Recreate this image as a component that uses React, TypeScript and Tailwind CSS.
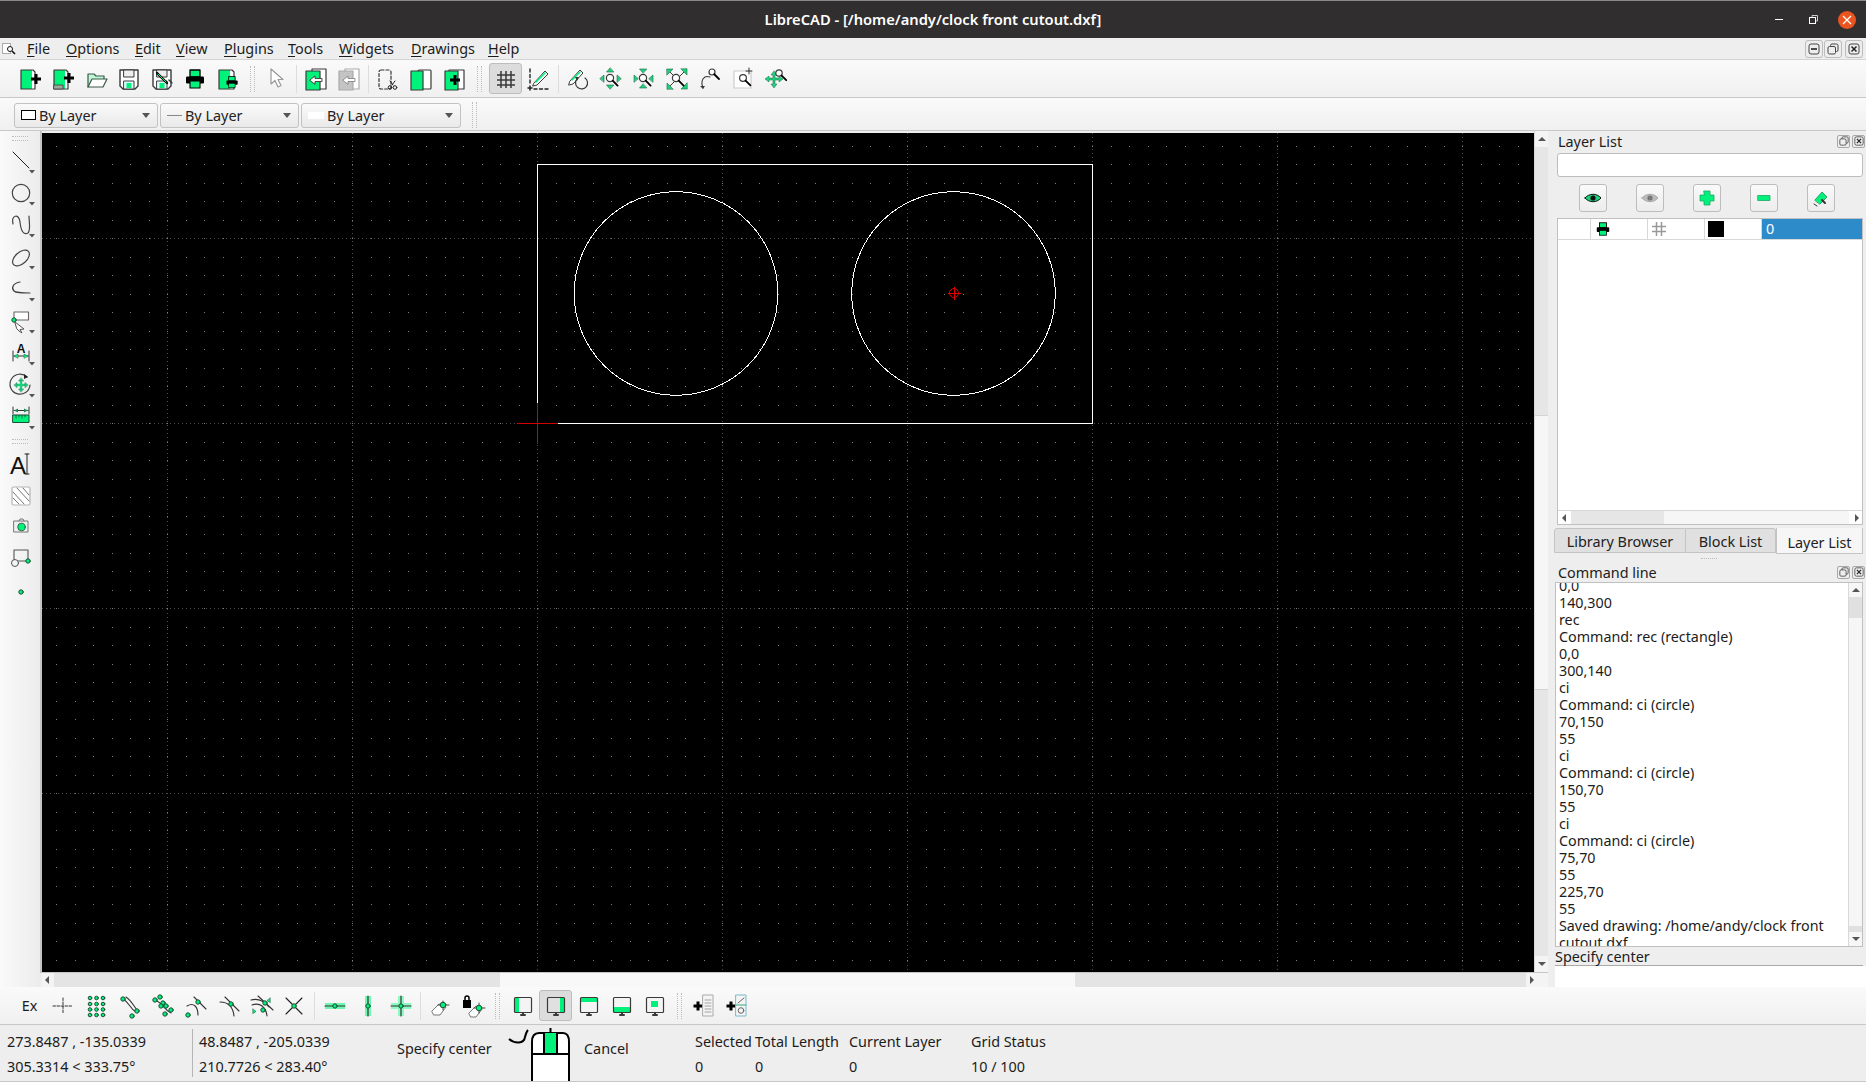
import React from "react";

const G = "#00f27a";
const S = "#3a3a3a";

function I({ children, s = 26 }: { children: React.ReactNode; s?: number }) {
  return (
    <svg width={s} height={s} viewBox={`0 0 ${s} ${s}`} fill="none" strokeLinecap="round" strokeLinejoin="round">
      {children}
    </svg>
  );
}
const Dot = ({ x, y, r = 2.2 }: { x: number; y: number; r?: number }) => (
  <circle cx={x} cy={y} r={r} fill={G} stroke="#1d4f38" strokeWidth={1} />
);
const Plus = ({ x, y, l = 5, w = 3 }: { x: number; y: number; l?: number; w?: number }) => (
  <path d={`M${x - l} ${y}H${x + l}M${x} ${y - l}V${y + l}`} stroke="#000" strokeWidth={w} strokeLinecap="butt" />
);
const Mag = ({ x, y, r = 3.6 }: { x: number; y: number; r?: number }) => (
  <g>
    <circle cx={x} cy={y} r={r} fill="#fff" stroke={S} strokeWidth={1.2} />
    <path d={`M${x + r * 0.75} ${y + r * 0.75}L${x + r + 4} ${y + r + 4}`} stroke="#000" strokeWidth={1.8} />
  </g>
);
const Page = ({ x = 4, w = 14, g = 11 }: { x?: number; w?: number; g?: number }) => (
  <g>
    <path d={`M${x} 4H${x + w - 2}L${x + w} 6V23H${x}Z`} fill="#fff" />
    <rect x={x} y={4} width={g} height={19} fill={G} />
    <path d={`M${x} 4H${x + w - 2}L${x + w} 6V23H${x}Z`} stroke={S} strokeWidth={1.2} />
  </g>
);
const Floppy = () => (
  <g>
    <path d="M4 4H22V20L19 23H7L4 20Z" fill="#fff" stroke={S} strokeWidth={1.4} />
    <rect x={8} y={4} width={10} height={7} fill="#eee" stroke={S} strokeWidth={1} />
    <rect x={8} y={15} width={10} height={8} fill="#dff" stroke={S} strokeWidth={1} />
    <rect x={10.5} y={17} width={5} height={5} fill={G} />
  </g>
);
const Printer = ({ x = 0, y = 0, k = 1 }: { x?: number; y?: number; k?: number }) => (
  <g transform={`translate(${x} ${y}) scale(${k})`}>
    <rect x={8} y={4} width={10} height={7} fill={G} stroke="#000" strokeWidth={1.3} />
    <rect x={4} y={10.500} width={18} height={7} rx={1.200} fill="#000" />
    <rect x={8} y={15} width={10} height={7} fill={G} stroke="#000" strokeWidth={1.1} />
  </g>
);
const Triangles = ({ inward }: { inward?: boolean }) => {
  const out = ["M12 2l-3.500 4h7z", "M12 23l-3.500-4h7z", "M2 12.500l4-3.500v7z", "M23 12.500l-4-3.500v7z"];
  const inw = ["M12 7l-3.500-4h7z", "M12 18l-3.500 4h7z", "M7 12.500l-4-3.500v7z", "M18 12.500l4-3.500v7z"];
  return (
    <g>
      {(inward ? inw : out).map((d) => (
        <path key={d} d={d} fill="#1fd07c" stroke="#1d6a48" strokeWidth={0.6} />
      ))}
    </g>
  );
};
const Monitor = ({ kind }: { kind: "l" | "r" | "t" | "b" | "c" }) => (
  <I>
    <rect x={5} y={5} width={16} height={14} fill={kind === "r" ? "#e0e0e0" : "#f4f4f4"} />
    {kind === "l" && <rect x={5} y={5} width={4} height={14} fill={G} />}
    {kind === "r" && <rect x={17} y={5} width={4} height={14} fill={G} />}
    {kind === "t" && <rect x={5} y={5} width={16} height={4} fill={G} />}
    {kind === "b" && <rect x={5} y={14} width={16} height={5} fill={G} />}
    {kind === "c" && <rect x={9} y={8} width={7} height={6} fill={G} />}
    <rect x={4.5} y={4.5} width={17} height={15} rx={1} stroke={S} strokeWidth={1.2} />
    <path d="M11 22h4M13 20v2" stroke={S} strokeWidth={2} />
  </I>
);

const top1: React.ReactNode[] = [
  <I key="a"><Page /><Plus x={19} y={13} /></I>,
  <I key="b"><Page /><rect x={4} y={19} width={9} height={4} fill="#9a9" stroke={S} strokeWidth={0.8} /><Plus x={19} y={12} /></I>,
  <I key="c">
    <path d="M5 21V8h6l2 2h8v4" fill="#bff7d8" stroke="#3a5a48" strokeWidth={1.2} />
    <path d="M5 21l4-8h15l-4 8z" fill="#fff" stroke="#3a5a48" strokeWidth={1.2} />
  </I>,
  <I key="d"><Floppy /></I>,
  <I key="e"><Floppy /><path d="M8 7l10 10" stroke="#000" strokeWidth={2.4} /><path d="M9 8l8 8" stroke={G} strokeWidth={1} /><path d="M20 14l3 3" stroke={S} strokeWidth={1.4} /></I>,
  <I key="f"><Printer /></I>,
  <I key="g"><Page x={4} w={15} g={11} /><Printer x={9} y={8} k={0.62} /></I>,
];
const arrow = (
  <I>
    <path d="M8 3V18L12 14.5L15 21L18 19.5L15 13.5H20Z" fill="#fff" stroke="#9a9a9a" strokeWidth={1.2} />
  </I>
);
const twoPages = (c: string) => (
  <I>
    <rect x={9} y={3} width={14} height={20} fill="#fff" stroke={c === G ? S : "#aaa"} strokeWidth={1.2} />
    <rect x={3} y={5} width={14} height={19} fill={c} stroke={c === G ? S : "#aaa"} strokeWidth={1.2} />
    <path d="M7 14l5-4v2.500h7v3h-7v2.500z" fill="#fff" stroke={c === G ? S : "#888"} strokeWidth={0.9} />
  </I>
);
const win3 = [
  <I key="a">
    <rect x={4} y={4} width={12} height={19} rx={2} stroke="#333" strokeWidth={1.2} strokeDasharray="3 2" />
    <path d="M15 15l3 4M20 15l-3 4" stroke="#222" strokeWidth={1} />
    <circle cx={15} cy={21.5} r={1.8} stroke="#222" />
    <circle cx={20} cy={21.5} r={1.8} stroke="#222" />
  </I>,
  <I key="b">
    <rect x={10} y={4} width={13} height={19} rx={1} fill="#fff" stroke={S} strokeWidth={1.2} />
    <rect x={3} y={5} width={12} height={19} fill={G} stroke={S} strokeWidth={1.2} />
  </I>,
  <I key="c">
    <rect x={8} y={4} width={15} height={19} fill="#fff" stroke={S} strokeWidth={1.2} />
    <rect x={4} y={5} width={13} height={19} fill={G} stroke={S} strokeWidth={1.2} />
    <Plus x={14} y={14} />
  </I>,
];
const gridIcon = (
  <I>
    <path d="M9 5V22M14 5V22M19 5V22M5 9H23M5 14H23M5 19H23" stroke={S} strokeWidth={1.5} strokeLinecap="butt" />
  </I>
);
const draft = (
  <I>
    <path d="M5 3V19M9 23H23" stroke="#222" strokeWidth={1.4} strokeDasharray="3 2.5" />
    <path d="M3 22H7M5 20V24" stroke="#222" strokeWidth={1.5} />
    <path d="M9 17L20 5L23 8L12 19L8 20Z" fill="#fff" stroke={S} strokeWidth={1} />
    <path d="M11 16L20 7" stroke={G} strokeWidth={1.6} />
  </I>
);
const zooms = [
  <I key="a">
    <path d="M5 15L15 4L18 7L8 18L4 19Z" fill="#fff" stroke={S} strokeWidth={1} />
    <path d="M7 14L15 6" stroke={G} strokeWidth={1.5} />
    <path d="M12 13A6 6 0 1 0 20 12" stroke={S} strokeWidth={1.2} />
    <path d="M10 11l4 0l-2 4z" fill={S} />
  </I>,
  <I key="b"><Triangles /><Mag x={12} y={12} /></I>,
  <I key="c"><Triangles inward /><Mag x={12} y={12} /></I>,
  <I key="d">
    <path d="M6 6L10 10M20 6L16 10M6 20L10 16" stroke={S} strokeWidth={1} />
    <path d="M3 3h6l-6 6zM23 3v6l-6-6zM3 23v-6l6 6zM23 23h-6l6-6z" fill="#1fd07c" stroke="#1d6a48" strokeWidth={0.6} />
    <Mag x={12} y={12} />
  </I>,
  <I key="e">
    <Mag x={15} y={6} r={3} />
    <path d="M6 22C3 14 7 9 13 11" stroke={S} strokeWidth={1.1} />
    <path d="M3 20l3 3l2-3" fill={S} />
  </I>,
  <I key="f">
    <rect x={4} y={5} width={17} height={17} fill="#fff" stroke="#ccc" strokeWidth={1.2} />
    <Mag x={13} y={12} r={3.4} />
    <path d="M19 2v6M16 5h6" stroke="#333" strokeWidth={1} />
  </I>,
  <I key="g">
    <path d="M11 5l-3 4h2v3H6v-2l-4 3 4 3v-2h4v4H8l3 4 3-4h-2v-4h4v2l4-3-4-3v2h-4V9h2z" fill="#1fd07c" stroke="#1d6a48" strokeWidth={0.5} />
    <Mag x={16} y={7} r={3.2} />
  </I>,
];

function Tb({ children, on }: { children?: React.ReactNode; on?: boolean }) {
  return (
    <div className="w-[33px] h-[34px] shrink-0 flex items-center justify-center">
      {on ? (
        <div className="w-[33px] h-[31px] rounded-[3px] border border-[#bdbdbd] bg-[#dcdcdc] flex items-center justify-center">{children}</div>
      ) : (
        children
      )}
    </div>
  );
}
const Sep = ({ w }: { w: string }) => (
  <div className={`${w} h-[28px] shrink-0 flex justify-center`}>
    <div className="w-px h-full bg-[#dddddd]" />
  </div>
);
const Handle = ({ w }: { w: string }) => (
  <div className={`${w} h-[26px] shrink-0 flex justify-center`}>
    <div className="w-[5px] h-full border-x border-dotted border-[#bcbcbc]" />
  </div>
);

const L = ({ children, tri = true }: { children: React.ReactNode; tri?: boolean }) => (
  <div className="w-[40px] h-[32px] shrink-0">
    <svg width={40} height={32} viewBox="0 0 40 32" fill="none" strokeLinecap="round" strokeLinejoin="round">
      {children}
      {tri && <path d="M29 24h6l-3 3.400z" fill="#555" />}
    </svg>
  </div>
);
const left1 = [
  <path key="a" d="M13 6L29 22" stroke="#222" strokeWidth={1} />,
  <circle key="b" cx={21} cy={15} r={8.7} stroke="#444" strokeWidth={1.2} />,
  <path key="c" d="M13 14C11 5 19 3 20 12C21 22 24 25 28 23C31 20 29 12 29 6" stroke="#444" strokeWidth={1.2} />,
  <ellipse key="d" cx={21} cy={16} rx={10} ry={5.8} transform="rotate(-42 21 16)" stroke="#444" strokeWidth={1.2} />,
  <path key="e" d="M20 8C13 9 11 14 14 17C16 19 20 19 30 19" stroke="#444" strokeWidth={1.2} />,
  <g key="f">
    <rect x={14} y={6} width={14.5} height={8} fill="#fff" stroke="#666" strokeWidth={1.1} />
    <path d="M15 16L24 23L20 23.500L22 27L19 25L17 23Z" fill="#fff" stroke="#555" strokeWidth={1} />
    <Dot x={14} y={14} />
  </g>,
  <g key="g">
    <text x={21} y={15} textAnchor="middle" fontSize={12} fontWeight={700} fill="#111" fontFamily="Liberation Sans, sans-serif">A</text>
    <path d="M13 13V23M29 13V23M14 18H28" stroke="#333" strokeWidth={1} />
    <path d="M14 18l4-2v4zM28 18l-4-2v4z" fill={G} stroke="#1d6a48" strokeWidth={0.5} />
  </g>,
  <g key="h">
    <path d="M27 7A10 10 0 1 0 30 15" stroke="#444" strokeWidth={1.2} />
    <path d="M24 4l4 3l-4 2z" fill="#222" />
    <path d="M21 11v8M17 15h8" stroke="#1fd07c" strokeWidth={2.4} strokeLinecap="butt" />
    <path d="M21 8l-2.500 3h5zM21 22l-2.500-3h5zM14 15l3-2.500v5zM28 15l-3-2.500v5z" fill="#1fd07c" stroke="#1d6a48" strokeWidth={0.4} />
  </g>,
  <g key="i">
    <path d="M13 5V12M29 5V12M14 8.500H28" stroke="#333" strokeWidth={1} />
    <path d="M14 8.500l4-2v4zM28 8.500l-4-2v4z" fill="#1d8a58" />
    <rect x={13} y={13} width={16} height={7.500} fill={G} stroke="#1d4f38" strokeWidth={1} />
    <path d="M16 13v3M19 13v2M22 13v3M25 13v2" stroke="#1d4f38" strokeWidth={0.8} />
  </g>,
];
const left2 = [
  <g key="a">
    <text x={18} y={26} textAnchor="middle" fontSize={24} fill="#111" fontFamily="Liberation Sans, sans-serif">A</text>
    <path d="M25 6h4M27 6V26M25 26h4" stroke="#222" strokeWidth={1} />
  </g>,
  <g key="b">
    <rect x={12} y={7} width={18} height={18} rx={1.5} fill="#fff" stroke="#b5b5b5" strokeWidth={1.2} />
    <path d="M13 12L24 24M13 18L19 24M17 8L29 21M23 8L29 15" stroke="#666" strokeWidth={0.9} />
  </g>,
  <g key="c">
    <rect x={14} y={9} width={14} height={11} fill="#eee" stroke="#777" strokeWidth={1} />
    <path d="M19 9l1-2h3l1 2" stroke="#777" />
    <circle cx={21.500} cy={15} r={3.800} fill={G} stroke="#1d4f38" strokeWidth={0.8} />
  </g>,
  <g key="d">
    <rect x={14} y={6} width={14} height={11} stroke="#555" strokeWidth={1.1} />
    <circle cx={15} cy={19} r={3.500} fill="#f4f4f4" stroke="#555" strokeWidth={1} />
    <Dot x={28} y={17} />
  </g>,
  <Dot key="e" x={21} y={16} />,
];

const Arc = ({ d }: { d: string }) => <path d={d} stroke="#333" strokeWidth={1.1} />;
const snaps = [
  <I key="a"><path d="M3 13H23M13 5V21" stroke="#333" strokeWidth={1} strokeDasharray="2.500 1.500" /></I>,
  <I key="b">
    {[7, 13.500, 20].flatMap((x) => [5, 11, 16.500, 22].map((y) => <Dot key={`${x}-${y}`} x={x} y={y} r={1.800} />))}
  </I>,
  <I key="c"><Arc d="M7 6C14 10 14 16 20 19" /><Arc d="M10 4C16 8 18 14 22 18" /><Dot x={7} y={6} /><Dot x={21} y={18} /><Dot x={16} y={23} /></I>,
  <I key="d"><Arc d="M6 7C14 10 14 16 22 20" /><Dot x={6} y={7} /><Dot x={11} y={4} /><Dot x={14} y={10} /><Dot x={12} y={13} /><Dot x={17} y={13} /><Dot x={22} y={17} /><Dot x={16} y={21} /></I>,
  <I key="e"><Arc d="M5 13C12 9 16 14 16 22" /><Arc d="M12 4L24 16" /><Dot x={16} y={9} /><Dot x={6} y={22} /></I>,
  <I key="f"><Arc d="M5 9C13 9 18 14 19 23" /><Arc d="M10 4L24 18" /><Dot x={16} y={11} /></I>,
  <I key="g"><Arc d="M4 12C12 9 18 14 19 23" /><Arc d="M10 3L25 17" /><Arc d="M3 7C10 5 16 8 21 14" /><Dot x={17} y={10} /><Dot x={15} y={17} /><path d="M22 5l-3 2.500l3 2zM5 16l3 2.500l-3 2z" fill={G} stroke="#1d6a48" strokeWidth={0.6} /></I>,
  <I key="h"><path d="M5 5L21 21M21 5L5 21" stroke="#222" strokeWidth={1.1} /><Dot x={13} y={13} /></I>,
];
const restricts = [
  <I key="a"><rect x={3} y={10} width={20} height={6} fill="#6ff7b2" /><path d="M3 13H23" stroke="#333" strokeWidth={1.2} /><Dot x={13} y={13} /></I>,
  <I key="b"><rect x={10} y={3} width={6} height={20} fill="#6ff7b2" /><path d="M13 3V23" stroke="#333" strokeWidth={1.2} /><Dot x={13} y={13} /></I>,
  <I key="c"><path d="M10 3h6v20h-6zM3 10h20v6H3z" fill="#8ff9c2" /><path d="M13 3V23M3 13H23" stroke="#333" strokeWidth={1.2} /><Dot x={13} y={13} /></I>,
];
const zeros = [
  <I key="a"><path d="M5 18L12 11L19 14L13 22L7 22Z" fill="#fff" stroke="#777" strokeWidth={1} /><path d="M16 8L16 17M11 12H22" stroke="#333" strokeWidth={0.9} /><Dot x={16} y={12} r={2.800} /></I>,
  <I key="b"><rect x={3} y={7} width={8} height={8} fill="#000" /><path d="M5 7V5a2 2 0 0 1 4 0v2" stroke="#000" strokeWidth={1.5} /><path d="M9 20L16 13L22 16L16 24L11 24Z" fill="#fff" stroke="#777" strokeWidth={1} /><path d="M19 10L19 20M14 15H25" stroke="#333" strokeWidth={0.9} /><Dot x={19} y={15} r={2.800} /></I>,
];
const adds = [
  <I key="a"><Plus x={7} y={13} l={4.500} /><rect x={12} y={2} width={10} height={21} fill="#f4f4f4" stroke="#aaa" strokeWidth={1} /><path d="M14 7h6M14 10h6M14 13h6M14 16h6M14 19h6" stroke="#999" strokeWidth={0.9} /></I>,
  <I key="b"><Plus x={7} y={13} l={4.500} /><rect x={12} y={2} width={10} height={21} fill="#f4f4f4" stroke="#7bc" strokeWidth={1} /><path d="M12 12h10" stroke="#3a8" strokeWidth={1} /><path d="M14 10l6-5" stroke="#555" strokeWidth={0.9} /><circle cx={17} cy={17.500} r={2.800} stroke="#555" strokeWidth={0.9} /></I>,
];

function MiniBtn({ kind, big }: { kind: "min" | "float" | "close"; big?: boolean }) {
  const cls = big
    ? "w-[18px] h-[18px] rounded-[3px] border border-[#bdbdbd] flex items-center justify-center"
    : "w-[13px] h-[13px] rounded-[2px] border border-[#a8a8a8] flex items-center justify-center";
  return (
    <div className={cls}>
      <svg width={big ? 12 : 10} height={big ? 12 : 10} viewBox="0 0 12 12" fill="none">
        {kind === "min" && <><rect x={1} y={1} width={10} height={10} rx={2} stroke="#444" /><path d="M3 6h6" stroke="#222" strokeWidth={1.6} /></>}
        {kind === "float" && <><rect x={3.500} y={1} width={7.500} height={7.500} rx={1.500} stroke="#444" /><rect x={1} y={3.500} width={7.500} height={7.500} rx={1.500} stroke="#444" fill="#eee" /></>}
        {kind === "close" && <><rect x={1} y={1} width={10} height={10} rx={2} stroke="#444" /><path d="M3.500 3.500l5 5M8.500 3.500l-5 5" stroke="#222" strokeWidth={1.5} /></>}
      </svg>
    </div>
  );
}

const menu: [string, string, string][] = [
  ["F", "ile", "w-[39px]"],
  ["O", "ptions", "w-[69px]"],
  ["E", "dit", "w-[41px]"],
  ["V", "iew", "w-[48px]"],
  ["Pl", "ugins", "w-[64px]"],
  ["T", "ools", "w-[51px]"],
  ["W", "idgets", "w-[72px]"],
  ["D", "rawings", "w-[77px]"],
  ["H", "elp", "w-[40px]"],
];

function Combo({ w, swatch, pl }: { w: string; swatch: React.ReactNode; pl: string }) {
  return (
    <div className={`${w} h-[25px] rounded-[3px] border border-[#c2c2c2] bg-linear-to-b from-[#fafafa] to-[#e9e9e9] flex items-center ${pl} shrink-0`}>
      {swatch}
      <span className="flex-1 text-[#222] pt-[1px]">By Layer</span>
      <svg width={8} height={5} viewBox="0 0 8 5" className="mr-[7px]"><path d="M0 0h8L4 5z" fill="#555" /></svg>
    </div>
  );
}

const ArrowBtn = ({ dir }: { dir: "l" | "r" | "u" | "d" }) => {
  const d = { l: "M6 1v8L2 5z", r: "M4 1v8l4-4z", u: "M1 7h8L5 3z", d: "M1 3h8L5 7z" }[dir];
  return <svg width={10} height={10} viewBox="0 0 10 10"><path d={d} fill="#555" /></svg>;
};

function Canvas() {
  const W = 1492;
  const H = 839;
  const x0 = 537.3;
  const y0 = 423.3;
  const step = 18.5;
  let dots = "";
  for (let i = -27; i < 55; i++) {
    for (let j = -16; j < 31; j++) {
      const x = Math.round(x0 + i * step);
      const y = Math.round(y0 + j * step);
      dots += `M${x} ${y}h1v1h-1z`;
    }
  }
  const mx = [-2, -1, 0, 1, 2, 3, 4, 5].map((n) => Math.round(x0 + n * 185));
  const my = [-1, 0, 1, 2].map((n) => Math.round(y0 + n * 185));
  return (
    <svg width={W} height={H} viewBox={`42 133 ${W} ${H}`} className="block bg-black shrink-0" shapeRendering="crispEdges" fill="none">
      <path d={dots} fill="#808080" />
      {mx.map((x) => <path key={x} d={`M${x + 0.5} 133V972`} stroke="#4c4c4c" strokeDasharray="1 3" />)}
      {my.map((y) => <path key={y} d={`M42 ${y + 0.5}H1534`} stroke="#4c4c4c" strokeDasharray="1 3" />)}
      <rect x={537.5} y={164.5} width={555} height={259} stroke="#fff" />
      <circle cx={676} cy={293.5} r={101.8} stroke="#fff" />
      <circle cx={953.5} cy={293.5} r={101.8} stroke="#fff" />
      <path d="M537.5 403V444M517 423.500H558" stroke="#d40000" />
      <circle cx={954} cy={293} r={4.500} stroke="#e00000" shapeRendering="auto" />
      <path d="M954 286.500V299.500M947.500 293H960.500" stroke="#e00000" />
    </svg>
  );
}

const cmd = [
  "0,0", "140,300", "rec", "Command: rec (rectangle)", "0,0", "300,140", "ci", "Command: ci (circle)", "70,150", "55", "ci",
  "Command: ci (circle)", "150,70", "55", "ci", "Command: ci (circle)", "75,70", "55", "225,70", "55",
  "Saved drawing: /home/andy/clock front", "cutout.dxf",
];

function SqBtn({ children }: { children: React.ReactNode }) {
  return (
    <div className="w-[28px] h-[28px] rounded-[3px] border border-[#bdbdbd] bg-linear-to-b from-[#fafafa] to-[#ececec] flex items-center justify-center">
      {children}
    </div>
  );
}

export default function App() {
  return (
    <div className="w-[1866px] h-[1082px] flex flex-col overflow-hidden bg-[#eeeeee] text-[14.400px] text-[#1c1c1c] [font-family:'Noto_Sans','Open_Sans',sans-serif]">
      {/* title */}
      <div className="h-[38px] shrink-0 bg-[#302e2e] border-t border-[#8a8a8a] grid grid-cols-[1fr_auto_1fr] items-center">
        <div />
        <div className="text-[14.700px] font-semibold text-white">LibreCAD - [/home/andy/clock front cutout.dxf]</div>
        <div className="flex justify-end items-center pr-[2px]">
          <div className="w-[34px] flex justify-center"><div className="w-[8px] h-[1px] bg-white" /></div>
          <div className="w-[34px] flex justify-center">
            <svg width={9} height={9} viewBox="0 0 9 9" fill="none"><path d="M3 2V.5H8.500V6H7" stroke="#ccc" /><rect x={.5} y={2.500} width={6} height={6} stroke="#fff" /></svg>
          </div>
          <div className="w-[34px] flex justify-center">
            <div className="w-[18px] h-[18px] rounded-full bg-[#e95420] flex items-center justify-center">
              <svg width={10} height={10} viewBox="0 0 10 10"><path d="M1 1l8 8M9 1l-8 8" stroke="#fff" strokeWidth={1.3} /></svg>
            </div>
          </div>
        </div>
      </div>
      {/* menu */}
      <div className="h-[22px] shrink-0 border-b border-[#d4d4d4] flex items-center">
        <div className="w-[27px] pl-[2px] shrink-0">
          <svg width={14} height={13} viewBox="0 0 14 13" fill="none"><rect x={.5} y={1.500} width={8} height={10} fill="#fff" stroke="#aaa" /><circle cx={8} cy={7} r={2.500} fill="#fff" stroke="#111" /><path d="M10 9l3 3" stroke="#111" strokeWidth={1.6} /></svg>
        </div>
        {menu.map(([u, r, w]) => (
          <div key={u} className={`${w} shrink-0`}>
            <span className="underline decoration-1 underline-offset-2">{u}</span>{r}
          </div>
        ))}
        <div className="flex-1" />
        <div className="flex gap-[1px] pr-[3px]">
          <MiniBtn kind="min" big /><MiniBtn kind="float" big /><div className="w-[1px]" /><MiniBtn kind="close" big />
        </div>
      </div>
      {/* toolbar 1 */}
      <div className="h-[38px] shrink-0 bg-linear-to-b from-[#fafafa] to-[#f0f0f0] border-b border-[#c8c8c8] flex items-center pl-[13.500px]">
        {top1.map((x, i) => <Tb key={i}>{x}</Tb>)}
        <Handle w="w-[15px]" />
        <Tb>{arrow}</Tb>
        <Sep w="w-[7px]" />
        <Tb>{twoPages(G)}</Tb>
        <Tb>{twoPages("#c4c4c4")}</Tb>
        <Sep w="w-[6px]" />
        {win3.map((x, i) => <Tb key={i}>{x}</Tb>)}
        <Handle w="w-[18px]" />
        <Tb on>{gridIcon}</Tb>
        <Tb>{draft}</Tb>
        <Sep w="w-[7px]" />
        {zooms.map((x, i) => <Tb key={i}>{x}</Tb>)}
      </div>
      {/* toolbar 2 */}
      <div className="h-[33px] shrink-0 bg-linear-to-b from-[#fafafa] to-[#f0f0f0] border-b border-[#c8c8c8] flex items-center pl-[14px] pt-[2px] gap-[2px]">
        <Combo w="w-[144px]" pl="pl-[6px]" swatch={<div className="w-[15px] h-[10px] border border-black bg-white mr-[3px]" />} />
        <Combo w="w-[139px]" pl="pl-[6px]" swatch={<div className="w-[15px] h-px bg-[#888] mr-[3px]" />} />
        <Combo w="w-[160px]" pl="pl-[6px]" swatch={<div className="w-[16px] h-[7px] bg-white mr-[3px]" />} />
        <Handle w="w-[22px]" />
      </div>
      {/* middle */}
      <div className="h-[856px] shrink-0 flex">
        {/* left tools */}
        <div className="w-[40px] shrink-0 bg-linear-to-r from-[#fafafa] to-[#ececec] flex flex-col">
          <div className="h-[15px] shrink-0 flex items-center justify-center"><div className="w-[16px] h-[5px] border-y border-dotted border-[#bcbcbc]" /></div>
          {left1.map((x, i) => <L key={i}>{x}</L>)}
          <div className="h-[14px] shrink-0 flex items-center justify-center"><div className="w-[16px] h-[5px] border-y border-dotted border-[#bcbcbc]" /></div>
          {left2.map((x, i) => <L key={i} tri={false}>{x}</L>)}
        </div>
        {/* center */}
        <div className="w-[1508px] shrink-0 flex flex-col">
          <div className="flex h-[841px] shrink-0">
            <div className="w-[2px] bg-[#c4c4c4]" />
            <div className="pt-[2px] bg-[#eeeeee]"><Canvas /></div>
            <div className="w-[14px] shrink-0 bg-[#f4f4f4] border-l border-[#d8d8d8] flex flex-col">
              <div className="h-[16px] flex items-center justify-center"><ArrowBtn dir="u" /></div>
              <div className="h-[268px] bg-[#e6e6e6]" />
              <div className="h-[275px] bg-[#f6f6f6] border-y border-[#d4d4d4]" />
              <div className="flex-1 bg-[#e6e6e6]" />
              <div className="h-[16px] flex items-center justify-center"><ArrowBtn dir="d" /></div>
            </div>
          </div>
          <div className="h-[15px] shrink-0 flex border-t border-[#c6c6c6]">
            <div className="w-[2px]" />
            <div className="w-[12px] bg-[#f4f4f4] flex items-center justify-center"><ArrowBtn dir="l" /></div>
            <div className="w-[446px] bg-[#e4e4e4]" />
            <div className="w-[575px] bg-[#f8f8f8]" />
            <div className="flex-1 bg-[#e4e4e4]" />
            <div className="w-[22px] bg-[#f4f4f4] flex items-center"><ArrowBtn dir="r" /></div>
          </div>
        </div>
        {/* right dock */}
        <div className="flex-1 min-w-0 flex flex-col pl-[7px] pr-[3px]">
          <div className="h-[20px] flex items-center justify-between pl-[3px] -mr-[2px] shrink-0">
            <span className="pt-[2px]">Layer List</span>
            <div className="flex gap-[2px]"><MiniBtn kind="float" /><MiniBtn kind="close" /></div>
          </div>
          <div className="h-[24px] mt-[2px] ml-[2px] rounded-[3px] border border-[#bdbdbd] bg-white shrink-0" />
          <div className="h-[41px] ml-[2px] flex items-center pl-[22px] gap-[29px] shrink-0">
            <SqBtn><I s={18}><path d="M1 9C5 4 13 4 17 9C13 14 5 14 1 9Z" fill="#1fd07c" stroke="#111" strokeWidth={1} /><circle cx={9} cy={9} r={2.600} fill="#111" /></I></SqBtn>
            <SqBtn><I s={18}><path d="M1 9C5 4 13 4 17 9C13 14 5 14 1 9Z" fill="#bbb" stroke="#aaa" strokeWidth={1} /><circle cx={9} cy={9} r={2.600} fill="#777" /></I></SqBtn>
            <SqBtn><I s={18}><path d="M6 2h6v4h4v6h-4v4H6v-4H2V6h4z" fill={G} stroke="#1aa866" strokeWidth={0.8} /></I></SqBtn>
            <SqBtn><I s={18}><rect x={3} y={6.500} width={12} height={5} fill={G} stroke="#1aa866" strokeWidth={0.8} /></I></SqBtn>
            <SqBtn><I s={18}><path d="M3 11L10 3L15 8L8 15Z" fill={G} stroke="#1a8a56" strokeWidth={0.8} /><path d="M10 11l3 3" stroke="#333" strokeWidth={2} /><path d="M2 15l3 2" stroke="#333" /></I></SqBtn>
          </div>
          <div className="h-[307px] ml-[2px] border border-[#c0c0c0] bg-white flex flex-col shrink-0">
            <div className="h-[21px] flex border-b border-[#d8d8d8] shrink-0">
              <div className="w-[33px] border-r border-[#d8d8d8]" />
              <div className="w-[57px] border-r border-[#d8d8d8] pl-[3px] flex items-center">
                <svg width={18} height={18} viewBox="0 0 26 26"><Printer /></svg>
              </div>
              <div className="w-[57px] border-r border-[#d8d8d8] pl-[4px] flex items-center">
                <svg width={14} height={14} viewBox="0 0 14 14"><path d="M4.500 0V14M9.500 0V14M0 4.500H14M0 9.500H14" stroke="#999" strokeWidth={1.5} /></svg>
              </div>
              <div className="w-[57px] border-r border-[#d8d8d8] pl-[3px] flex items-center"><div className="w-[16px] h-[16px] bg-black" /></div>
              <div className="flex-1 bg-[#2e8bc9] text-white pl-[4px] flex items-center">0</div>
            </div>
            <div className="flex-1" />
            <div className="h-[14px] flex border-t border-[#d8d8d8] shrink-0">
              <div className="w-[13px] flex items-center justify-center"><ArrowBtn dir="l" /></div>
              <div className="w-[93px] bg-[#e6e6e6]" />
              <div className="flex-1 bg-[#f6f6f6]" />
              <div className="w-[13px] flex items-center justify-center"><ArrowBtn dir="r" /></div>
            </div>
          </div>
          <div className="flex h-[27px] mt-[3px] ml-[-1px] text-[#222] shrink-0">
            <div className="w-[132px] h-[25px] bg-[#e0e0e0] border border-[#c4c4c4] rounded-tl-[3px] flex items-center justify-center pt-[2px]">Library Browser</div>
            <div className="w-[90px] h-[25px] bg-[#e0e0e0] border border-[#c4c4c4] border-l-0 rounded-tr-[3px] flex items-center justify-center pt-[2px]">Block List</div>
            <div className="w-[87px] h-[26px] bg-[#f6f6f6] border border-[#c4c4c4] border-t-0 flex items-center justify-center pt-[4px]">Layer List</div>
          </div>
          <div className="h-[7px] flex justify-center items-center shrink-0"><div className="w-[16px] h-[2px] border-t border-dotted border-[#bcbcbc]" /></div>
          <div className="h-[20px] flex items-center justify-between pl-[3px] -mr-[2px] shrink-0">
            <span className="pt-[2px]">Command line</span>
            <div className="flex gap-[2px]"><MiniBtn kind="float" /><MiniBtn kind="close" /></div>
          </div>
          <div className="h-[365px] flex border border-[#c0c0c0] bg-white shrink-0 overflow-hidden">
            <div className="flex-1 min-w-0 overflow-hidden pl-[3px]">
              <div className="-mt-[6.500px] text-[14.300px] leading-[17px]">
                {cmd.map((c, i) => <div key={i} className="whitespace-nowrap">{c}</div>)}
              </div>
            </div>
            <div className="w-[14px] shrink-0 border-l border-[#d8d8d8] bg-[#f6f6f6] flex flex-col">
              <div className="h-[14px] flex items-center justify-center"><ArrowBtn dir="u" /></div>
              <div className="h-[21px] bg-[#e0e0e0]" />
              <div className="flex-1" />
              <div className="h-[6px] bg-[#e0e0e0]" />
              <div className="h-[14px] flex items-center justify-center"><ArrowBtn dir="d" /></div>
            </div>
          </div>
          <div className="h-[19px] flex items-center border-b border-[#aaaaaa] pt-[2px] shrink-0">Specify center</div>
          <div className="flex-1 bg-white -mr-[3px]" />
        </div>
      </div>
      {/* bottom toolbar */}
      <div className="h-[38px] shrink-0 bg-linear-to-b from-[#fafafa] to-[#f0f0f0] border-b border-[#c8c8c8] flex items-center pl-[13px]">
        <Tb><span>Ex</span></Tb>
        {snaps.map((x, i) => <Tb key={i}>{x}</Tb>)}
        <Sep w="w-[8px]" />
        {restricts.map((x, i) => <Tb key={i}>{x}</Tb>)}
        <Sep w="w-[6px]" />
        {zeros.map((x, i) => <Tb key={i}>{x}</Tb>)}
        <Handle w="w-[17px]" />
        <Tb><Monitor kind="l" /></Tb>
        <Tb on><Monitor kind="r" /></Tb>
        <Tb><Monitor kind="t" /></Tb>
        <Tb><Monitor kind="b" /></Tb>
        <Tb><Monitor kind="c" /></Tb>
        <Handle w="w-[16px]" />
        {adds.map((x, i) => <Tb key={i}>{x}</Tb>)}
      </div>
      {/* status */}
      <div className="h-[57px] shrink-0 flex border-b border-[#c8c8c8] leading-[25px]">
        <div className="w-[193px] pl-[7px] pt-[4px] border-r border-[#b5b5b5] my-[4px] shrink-0">
          <div className="-mt-[4px]">273.8487 , -135.0339</div>
          <div>305.3314 &lt; 333.75°</div>
        </div>
        <div className="w-[204px] pl-[6px] pt-[4px] shrink-0">
          <div>48.8487 , -205.0339</div>
          <div>210.7726 &lt; 283.40°</div>
        </div>
        <div className="w-[110px] shrink-0 flex items-center pb-[10px]">Specify center</div>
        <div className="w-[77px] shrink-0">
          <svg width={64} height={56} viewBox="0 0 64 56" fill="none">
            <path d="M2 14C8 19 17 19 18 12C19 8 20 6 21 5" stroke="#000" strokeWidth={2} />
            <path d="M25 56V17C25 10 28 8 32 8H56C60 8 62 11 62 17V56" fill="#fff" stroke="#000" strokeWidth={2} />
            <rect x={38} y={8} width={11} height={21} fill={G} />
            <path d="M25 29H62M37 8V29M50 8V29M43.500 3V8" stroke="#000" strokeWidth={2} />
          </svg>
        </div>
        <div className="w-[111px] shrink-0 flex items-center pb-[10px]">Cancel</div>
        <div className="w-[60px] pt-[4px] shrink-0"><div>Selected</div><div>0</div></div>
        <div className="w-[94px] pt-[4px] shrink-0"><div>Total Length</div><div>0</div></div>
        <div className="w-[122px] pt-[4px] shrink-0"><div>Current Layer</div><div>0</div></div>
        <div className="pt-[4px] shrink-0"><div>Grid Status</div><div>10 / 100</div></div>
      </div>
    </div>
  );
}
